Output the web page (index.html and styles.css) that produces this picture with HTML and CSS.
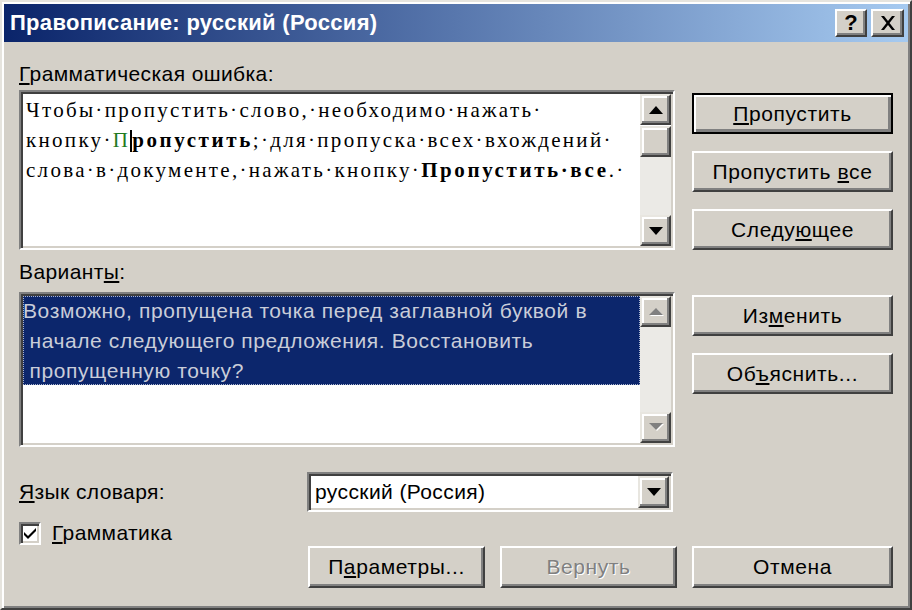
FILE: index.html
```html
<!DOCTYPE html>
<html lang="ru">

<head>
    <meta charset="UTF-8" />
    <title>Правописание: русский (Россия)</title>
    <link rel="stylesheet" href="styles.css">
</head>

<body>
    <div class="window">
        <div class="titlebar">
            <span class="title">Правописание: русский (Россия)</span>
            <div class="title-buttons">
                <button class="tb tb-help">?</button>
                <button class="tb tb-close">
                    <svg width="16" height="14" viewBox="0 0 16 14"><path d="M1 0h3l4 5 4-5h3l-5.5 7 5.5 7h-3l-4-5-4 5H1l5.5-7z" /></svg>
                </button>
            </div>
        </div>

        <div class="content">
            <div class="label"><u>Г</u>рамматическая ошибка:</div>
            <div class="row">
                <div class="field sunken">
                    <div class="error-text">
                        Чтобы·пропустить·слово,·необходимо·нажать·<br>
                        кнопку·<span class="hl">П</span><span class="caret"></span><b>ропустить</b>;·для·пропуска·всех·вхождений·<br>
                        слова·в·документе,·нажать·кнопку·<b>Пропустить·все</b>.·
                    </div>
                    <div class="scrollbar">
                        <div class="sb-btn">
                            <svg width="14" height="8" viewBox="0 0 14 8"><path d="M7 0l7 8H0z" /></svg>
                        </div>
                        <div class="sb-btn sb-thumb"></div>
                        <div class="sb-track"></div>
                        <div class="sb-btn">
                            <svg width="14" height="8" viewBox="0 0 14 8"><path d="M0 0h14L7 8z" /></svg>
                        </div>
                    </div>
                </div>
                <div class="btn-col">
                    <button class="btn btn-default"><u>П</u>ропустить</button>
                    <button class="btn">Пропустить <u>в</u>се</button>
                    <button class="btn">Следу<u>ю</u>щее</button>
                </div>
            </div>

            <div class="label label-gap">Вариант<u>ы</u>:</div>
            <div class="row">
                <div class="field sunken list">
                    <div class="suggestions">
                        <div class="selected">
                            Возможно, пропущена точка перед заглавной буквой в<br>
                            &nbsp;начале следующего предложения. Восстановить<br>
                            &nbsp;пропущенную точку?
                        </div>
                    </div>
                    <div class="scrollbar">
                        <div class="sb-btn">
                            <svg width="16" height="9" viewBox="0 0 16 9"><path d="M8 1l7 7H1z" fill="#fff" transform="translate(1 1)" /><path d="M8 1l7 7H1z" fill="#808080" /></svg>
                        </div>
                        <div class="sb-track"></div>
                        <div class="sb-btn">
                            <svg width="16" height="9" viewBox="0 0 16 9"><path d="M1 0h14L8 7z" fill="#fff" transform="translate(1 1)" /><path d="M1 0h14L8 7z" fill="#808080" /></svg>
                        </div>
                    </div>
                </div>
                <div class="btn-col">
                    <button class="btn">Из<u>м</u>енить</button>
                    <button class="btn">Об<u>ъ</u>яснить...</button>
                </div>
            </div>

            <div class="lang-row">
                <div class="lang-label"><u>Я</u>зык словаря:</div>
                <div class="combo sunken">
                    <span class="combo-value">русский (Россия)</span>
                    <div class="sb-btn combo-btn">
                        <svg width="14" height="8" viewBox="0 0 14 8"><path d="M0 0h14L7 8z" /></svg>
                    </div>
                </div>
            </div>

            <div class="bottom-row">
                <div class="check-wrap">
                    <span class="checkbox sunken">
                        <svg width="14" height="12" viewBox="0 0 14 12"><path d="M1 5l4 4 8-8v3l-8 8-4-4z" /></svg>
                    </span>
                    <span><u>Г</u>рамматика</span>
                </div>
                <div class="bottom-buttons">
                    <button class="btn btn-params">П<u>а</u>раметры...</button>
                    <button class="btn btn-undo" disabled>Вернуть</button>
                    <button class="btn btn-cancel">Отмена</button>
                </div>
            </div>
        </div>
    </div>
</body>

</html>
```

FILE: styles.css
```css
* {
    box-sizing: border-box;
    margin: 0;
    padding: 0;
}

body {
    font-family: 'Liberation Sans', Arial, sans-serif;
    font-size: 21px;
    letter-spacing: 0.4px;
    color: #000;
    background: #d4d0c8;
}

u {
    text-underline-offset: 2px;
}

.window {
    width: 912px;
    height: 610px;
    background: #d4d0c8;
    border: 2px solid;
    border-color: #e6e4de #404040 #404040 #e6e4de;
    box-shadow: inset 2px 2px #fff, inset -2px -2px #808080;
    padding: 2px;
}

/* Title bar */
.titlebar {
    height: 38px;
    display: flex;
    align-items: center;
    justify-content: space-between;
    padding: 0 4px 0 6px;
    background: linear-gradient(to right, #0a246a, #a6caf0);
}

.title {
    color: #fff;
    font-weight: bold;
    font-size: 22px;
    letter-spacing: 0.3px;
}

.title-buttons {
    display: flex;
    gap: 4px;
}

.tb {
    width: 32px;
    height: 28px;
    background: #d4d0c8;
    border: 2px solid;
    border-color: #fff #404040 #404040 #fff;
    box-shadow: inset -2px -2px #808080;
    display: flex;
    align-items: center;
    justify-content: center;
    font: bold 22px 'Liberation Sans', Arial, sans-serif;
}

.tb-close {
    width: 33px;
}

/* Content */
.content {
    padding: 20px 15px 0 15px;
}

.label {
    height: 24px;
    line-height: 24px;
}

.label-gap {
    margin-top: 10px;
}

.row {
    display: flex;
    gap: 17px;
    margin-top: 4px;
}

.row + .label-gap + .row {
    margin-top: 8px;
}

.sunken {
    background: #fff;
    border: 2px solid;
    border-color: #808080 #fff #fff #808080;
    box-shadow: inset 2px 2px #404040, inset -2px -2px #d4d0c8;
    padding: 2px;
}

.field {
    width: 656px;
    height: 160px;
    display: flex;
}

.list {
    height: 155px;
}

.error-text {
    flex: 1;
    padding: 1px 0 0 3px;
    font-family: 'Liberation Serif', 'Times New Roman', serif;
    font-size: 21px;
    letter-spacing: 2.3px;
    line-height: 30px;
    white-space: nowrap;
}

.error-text b {
    letter-spacing: 2.6px;
}

.hl {
    color: #1f7a1f;
}

.caret {
    display: inline-block;
    width: 2px;
    height: 22px;
    background: #000;
    vertical-align: -5px;
}

/* Scrollbars */
.scrollbar {
    width: 31px;
    display: flex;
    flex-direction: column;
}

.sb-btn {
    height: 31px;
    background: #d4d0c8;
    border: 2px solid;
    border-color: #e8e6e0 #404040 #404040 #e8e6e0;
    box-shadow: inset -2px -2px #808080, inset 2px 2px #fff;
    display: flex;
    align-items: center;
    justify-content: center;
}

.sb-thumb {
    margin-top: 1px;
}

.sb-track {
    flex: 1;
    background: #ebeae6;
}

/* Suggestions list */
.suggestions {
    flex: 1;
}

.selected {
    height: 89px;
    background: #0c266c;
    color: #c9cdd9;
    outline: 1px dotted #a9b4cf;
    outline-offset: -1px;
    line-height: 30px;
    font-size: 21px;
    letter-spacing: 0.6px;
    white-space: nowrap;
}

/* Right buttons */
.btn-col {
    display: flex;
    flex-direction: column;
    gap: 17px;
    padding-top: 3px;
}

.btn {
    width: 201px;
    height: 41px;
    background: #d4d0c8;
    border: 2px solid;
    border-color: #fff #404040 #404040 #fff;
    box-shadow: inset -2px -2px #808080;
    font: inherit;
    letter-spacing: 0.6px;
    color: #000;
}

.btn-default {
    border-color: #000;
    box-shadow: inset 2px 2px #fff, inset -3px -3px #808080;
}

/* Language */
.lang-row {
    display: flex;
    align-items: center;
    margin-top: 25px;
}

.lang-label {
    width: 288px;
}

.combo {
    width: 366px;
    height: 40px;
    display: flex;
    align-items: center;
    justify-content: space-between;
}

.combo-value {
    padding-left: 4px;
}

.combo-btn {
    width: 31px;
    height: 32px;
}

/* Bottom */
.bottom-row {
    display: flex;
    margin-top: 9px;
}

.check-wrap {
    width: 290px;
    display: flex;
    align-items: center;
    gap: 11px;
    height: 24px;
}

.checkbox {
    width: 22px;
    height: 23px;
    display: flex;
    align-items: center;
    justify-content: center;
    padding: 0;
}

.bottom-buttons {
    display: flex;
    gap: 15px;
    margin-top: 25px;
}

.btn-params,
.btn-undo {
    width: 177px;
    height: 42px;
}

.btn-cancel {
    height: 42px;
}

.btn-undo {
    color: #808080;
    text-shadow: 1px 1px #fff;
}
```
